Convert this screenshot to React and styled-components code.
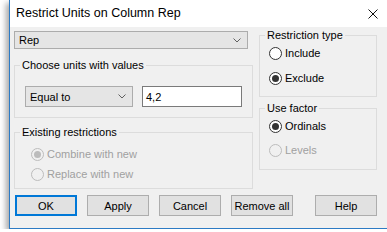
import React from 'react'
import styled, { createGlobalStyle } from 'styled-components'

const Global = createGlobalStyle`
  html, body {
    margin: 0;
    padding: 0;
    background: #fff;
    overflow: hidden;
  }
  body {
    font-family: "Liberation Sans", Arial, sans-serif;
    font-size: 11px;
    color: #000;
  }
`

const Window = styled.div`
  margin-left: 9px;
  width: 378px;
  border-left: 1px solid #2d7bc4;
  border-bottom: 1px solid #2d7bc4;
  box-shadow: -3px 3px 6px rgba(0, 0, 0, 0.35);
`

const TitleBar = styled.div`
  height: 27px;
  background: #fff;
  display: flex;
  align-items: center;
  padding-left: 6px;
  padding-right: 10px;
`

const Title = styled.div`
  flex: 1;
  font-size: 12.5px;
  padding-bottom: 1px;
`

const Body = styled.div`
  background: #f0f0f0;
  padding: 1px 0 6px 4px;
`

const Main = styled.div`
  display: grid;
  grid-template-columns: 239px 118px;
  column-gap: 6px;
  align-items: start;
`

const Column = styled.div`
  display: flex;
  flex-direction: column;
  gap: ${p => p.$gap}px;
  padding-top: ${p => p.$top}px;
`

const Combo = styled.div`
  box-sizing: border-box;
  width: ${p => p.$w}px;
  height: ${p => p.$h}px;
  background: #e5e5e5;
  border: 1px solid #acacac;
  display: flex;
  align-items: center;
  padding: 0 6px 0 4px;
  span { flex: 1; }
`

const Group = styled.fieldset`
  box-sizing: border-box;
  margin: 0 0 0 0;
  min-inline-size: 0;
  height: ${p => p.$h}px;
  border: 1px solid #dcdcdc;
  padding: 0;
`

const Legend = styled.legend`
  font-size: 11px;
  line-height: 14px;
  padding: 0 2px;
  margin-left: 5px;
`

const GroupBody = styled.div`
  display: flex;
  flex-direction: ${p => (p.$row ? 'row' : 'column')};
  gap: ${p => p.$gap}px;
  padding: ${p => p.$pt}px 0 0 ${p => p.$pl}px;
`

const TextBox = styled.div`
  box-sizing: border-box;
  width: 100px;
  height: 21px;
  background: #fff;
  border: 1px solid #7a7a7a;
  display: flex;
  align-items: center;
  padding-left: 3px;
`

const RadioRow = styled.div`
  height: 20px;
  display: flex;
  align-items: center;
  gap: 3px;
  color: ${p => (p.$disabled ? '#a0a0a0' : '#000')};
`

const Circle = styled.span`
  box-sizing: border-box;
  width: 13px;
  height: 13px;
  border-radius: 50%;
  border: 1px solid ${p => (p.$disabled ? '#bcbcbc' : '#333')};
  background: ${p => (p.$disabled ? '#f0f0f0' : '#fff')};
  display: flex;
  align-items: center;
  justify-content: center;
  &::after {
    content: '';
    width: 7px;
    height: 7px;
    border-radius: 50%;
    background: ${p => (p.$disabled ? '#bcbcbc' : '#333')};
    display: ${p => (p.$checked ? 'block' : 'none')};
  }
`

const ButtonRow = styled.div`
  display: flex;
  gap: 10px;
  padding: 6px 0 6px 1px;
`

const Button = styled.div`
  box-sizing: border-box;
  width: 62px;
  height: 21px;
  background: #e1e1e1;
  border: ${p => (p.$default ? '2px solid #0078d7' : '1px solid #adadad')};
  display: flex;
  align-items: center;
  justify-content: center;
  margin-left: ${p => p.$push || 0}px;
`

const Chevron = () => (
  <svg width="8" height="5" viewBox="0 0 8 5">
    <path d="M0.5 0.5 L4 4 L7.5 0.5" fill="none" stroke="#606060" strokeWidth="1" />
  </svg>
)

const Close = () => (
  <svg width="10" height="10" viewBox="0 0 10 10">
    <path d="M0.5 0.5 L9.5 9.5 M9.5 0.5 L0.5 9.5" stroke="#111" strokeWidth="1" />
  </svg>
)

const Radio = ({ label, checked, disabled }) => (
  <RadioRow $disabled={disabled}>
    <Circle $checked={checked} $disabled={disabled} />
    {label}
  </RadioRow>
)

export default function App() {
  return (
    <>
      <Global />
      <Window>
        <TitleBar>
          <Title>Restrict Units on Column Rep</Title>
          <Close />
        </TitleBar>
        <Body>
          <Main>
            <Column $gap={9} $top={3}>
              <Combo $w={234} $h={18}>
                <span>Rep</span>
                <Chevron />
              </Combo>
              <Group $h={60}>
                <Legend>Choose units with values</Legend>
                <GroupBody $row $pt={14} $pl={10} $gap={9}>
                  <Combo $w={108} $h={21}>
                    <span>Equal to</span>
                    <Chevron />
                  </Combo>
                  <TextBox>4,2</TextBox>
                </GroupBody>
              </Group>
              <Group $h={64} style={{ marginTop: -2 }}>
                <Legend>Existing restrictions</Legend>
                <GroupBody $pt={5} $pl={16} $gap={0}>
                  <Radio label="Combine with new" checked disabled />
                  <Radio label="Replace with new" disabled />
                </GroupBody>
              </Group>
            </Column>
            <Column $gap={4} $top={0}>
              <Group $h={69}>
                <Legend>Restriction type</Legend>
                <GroupBody $pt={1} $pl={9} $gap={5}>
                  <Radio label="Include" />
                  <Radio label="Exclude" checked />
                </GroupBody>
              </Group>
              <Group $h={69}>
                <Legend>Use factor</Legend>
                <GroupBody $pt={1} $pl={9} $gap={4}>
                  <Radio label="Ordinals" checked />
                  <Radio label="Levels" disabled />
                </GroupBody>
              </Group>
            </Column>
          </Main>
          <ButtonRow>
            <Button $default>OK</Button>
            <Button>Apply</Button>
            <Button>Cancel</Button>
            <Button>Remove all</Button>
            <Button $push={12}>Help</Button>
          </ButtonRow>
        </Body>
      </Window>
    </>
  )
}
